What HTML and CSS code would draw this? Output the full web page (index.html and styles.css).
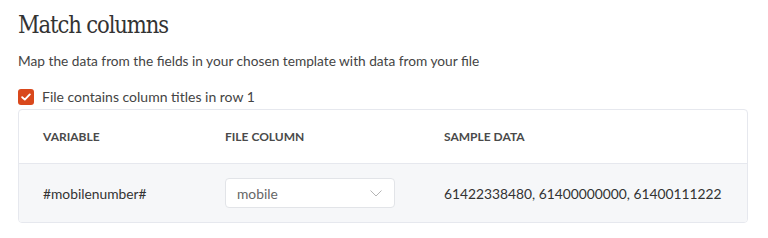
FILE: index.html
```html
<!DOCTYPE html>
<html lang="en">
<head>
    <meta charset="UTF-8">
    <title>Match columns</title>
    <link rel="stylesheet" href="styles.css">
</head>
<body>
    <div class="page">
        <h1>Match columns</h1>
        <p class="intro">Map the data from the fields in your chosen template with data from your file</p>

        <label class="check">
            <span class="box">
                <svg width="10" height="8" viewBox="0 0 10 8"><path d="M1.2 4.2 L3.8 6.6 L8.8 1.4" fill="none" stroke="#fff" stroke-width="1.9" stroke-linecap="round" stroke-linejoin="round"/></svg>
            </span>
            File contains column titles in row 1
        </label>

        <div class="mapping">
            <div class="row head">
                <div>Variable</div>
                <div>File column</div>
                <div>Sample data</div>
            </div>
            <div class="row body">
                <div>#mobilenumber#</div>
                <div>
                    <div class="select">
                        <span>mobile</span>
                        <svg width="12" height="7" viewBox="0 0 12 7"><path d="M0.5 0.5 L6 6 L11.5 0.5" fill="none" stroke="#b5b5b5" stroke-width="1"/></svg>
                    </div>
                </div>
                <div>61422338480, 61400000000, 61400111222</div>
            </div>
        </div>
    </div>
</body>
</html>
```

FILE: styles.css
```css
body {
    margin: 0;
    background: #fff;
    font-family: Lato, "Open Sans", sans-serif;
    color: #333;
}
.page {
    padding: 10px 20px 0 18px;
}
h1 {
    font-family: "DejaVu Serif", serif;
    font-weight: normal;
    font-stretch: condensed;
    font-size: 23.5px;
    letter-spacing: -1.1px;
    color: #333;
    margin: 0;
    line-height: 30px;
}
.intro {
    font-size: 13.7px;
    color: #444;
    margin: 12px 0 0;
    line-height: 18px;
}
.check {
    display: flex;
    align-items: center;
    gap: 8px;
    font-size: 14px;
    color: #444;
    margin-top: 18px;
    line-height: 18px;
}
.box {
    width: 16px;
    height: 16px;
    border-radius: 3px;
    background: #d9481c;
    display: flex;
    align-items: center;
    justify-content: center;
}
.mapping {
    margin-top: 3px;
    width: 728px;
    border: 1px solid #e6e8ee;
    border-radius: 4px;
    overflow: hidden;
}
.row {
    display: grid;
    grid-template-columns: 182px 219px 1fr;
    padding-left: 24px;
    align-items: center;
}
.head {
    height: 53px;
    font-size: 12px;
    font-weight: bold;
    text-transform: uppercase;
    color: #4a4a4a;
    border-bottom: 1px solid #e6e8ee;
}
.body {
    height: 58px;
    background: #f6f7f9;
    font-size: 13.8px;
    color: #333;
}
.select {
    width: 170px;
    height: 30px;
    box-sizing: border-box;
    background: #fff;
    border: 1px solid #e2e4e8;
    border-radius: 4px;
    display: flex;
    align-items: center;
    justify-content: space-between;
    padding: 0 12px 0 11px;
    color: #666;
}
```
